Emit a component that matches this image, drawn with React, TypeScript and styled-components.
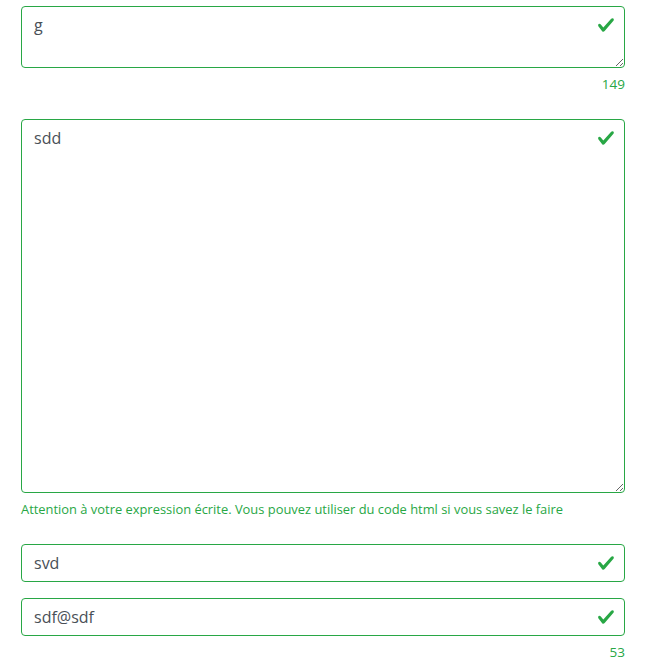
import React from 'react';
import styled, { createGlobalStyle } from 'styled-components';

const GlobalStyle = createGlobalStyle`
  * { box-sizing: border-box; }
  body {
    margin: 0;
    background: #fff;
    font-family: "Open Sans", "Noto Sans", "Liberation Sans", sans-serif;
    color: #495057;
  }
`;

const Page = styled.div`
  padding: 6px 22px 0 21px;
  width: 647px;
`;

const FormGroup = styled.div<{ spaced?: boolean }>`
  margin-bottom: ${({ spaced }) => (spaced ? '24px' : '16px')};
`;

const Field = styled.div`
  position: relative;
`;

const fieldBase = `
  display: block;
  width: 100%;
  font-family: inherit;
  font-size: 16px;
  line-height: 24px;
  color: #495057;
  background: #fff;
  border: 1px solid #28a745;
  border-radius: 4px;
  padding: 6px 39px 6px 12px;
  outline: none;
  margin: 0;
`;

const TextArea = styled.textarea<{ h: number }>`
  ${fieldBase}
  height: ${({ h }) => h}px;
  resize: vertical;
`;

const Input = styled.input`
  ${fieldBase}
  height: 38px;
`;

const Check = styled.svg`
  position: absolute;
  right: 10px;
  top: 10px;
  width: 18px;
  height: 18px;
  pointer-events: none;
`;

const Hint = styled.small<{ counter?: boolean }>`
  display: block;
  margin-top: 6px;
  font-size: ${({ counter }) => (counter ? '13.5px' : '12.9px')};
  line-height: 21px;
  color: #28a745;
  text-align: ${({ counter }) => (counter ? 'right' : 'left')};
`;

const CheckIcon = () => (
  <Check viewBox="0 0 8 8">
    <path
      fill="#28a745"
      d="M2.3 6.73L.6 4.53c-.4-1.04.46-1.4 1.1-.8l1.1 1.4 3.4-3.8c.6-.63 1.6-.27 1.2.7l-4 4.6c-.43.5-.8.4-1.1.1z"
    />
  </Check>
);

export default function App() {
  return (
    <Page>
      <GlobalStyle />
      <FormGroup spaced>
        <Field>
          <TextArea h={62} defaultValue="g" />
          <CheckIcon />
        </Field>
        <Hint counter>149</Hint>
      </FormGroup>

      <FormGroup spaced>
        <Field>
          <TextArea h={374} defaultValue="sdd" />
          <CheckIcon />
        </Field>
        <Hint>Attention à votre expression écrite. Vous pouvez utiliser du code html si vous savez le faire</Hint>
      </FormGroup>

      <FormGroup>
        <Field>
          <Input defaultValue="svd" />
          <CheckIcon />
        </Field>
      </FormGroup>

      <FormGroup>
        <Field>
          <Input defaultValue="sdf@sdf" />
          <CheckIcon />
        </Field>
        <Hint counter>53</Hint>
      </FormGroup>
    </Page>
  );
}
